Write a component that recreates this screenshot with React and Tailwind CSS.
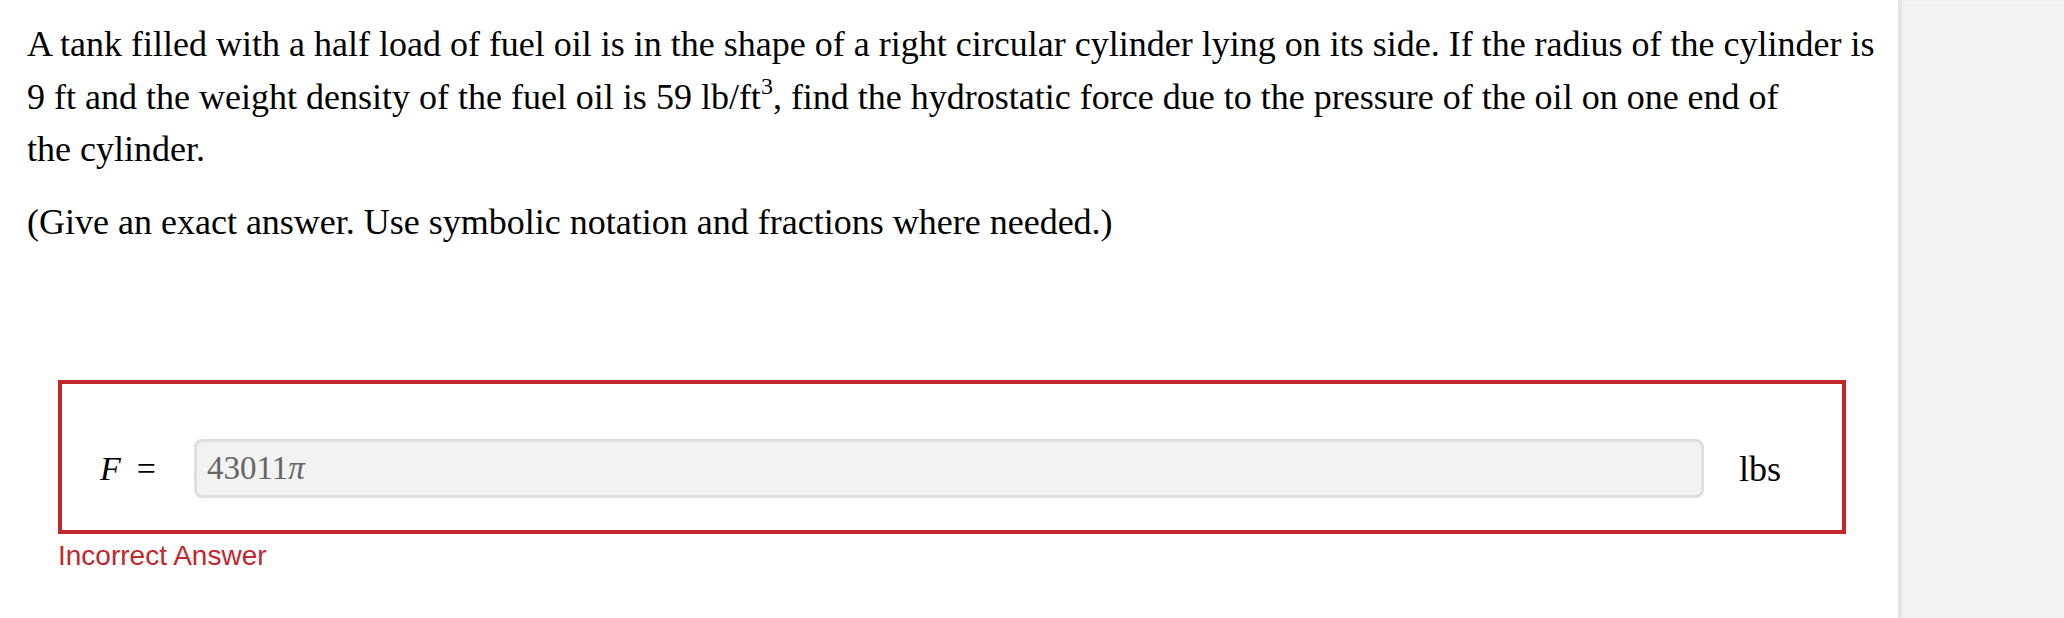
import React from 'react';

const serif = { fontFamily: '"Liberation Serif", "Times New Roman", serif' };

export default function App() {
  return (
    <div className="flex min-h-[618px] w-full bg-white">
      {/* question area */}
      <div className="flex-1 pt-[18px] pl-[27px]">
        <p
          className="text-[36px] leading-[52.5px] text-black whitespace-nowrap font-['Liberation_Serif',serif]"
        >
          A tank filled with a half load of fuel oil is in the shape of a right circular cylinder lying on its side. If the radius of the cylinder is
          <br />
          9 ft and the weight density of the fuel oil is 59 lb/ft
          <sup className="text-[24px] leading-none relative top-[-15px]">3</sup>, find the hydrostatic force due to the pressure of the oil on one end of
          <br />
          the cylinder.
        </p>
        <p className="mt-[20px] text-[36px] leading-[52.5px] text-black font-['Liberation_Serif',serif]">
          (Give an exact answer. Use symbolic notation and fractions where needed.)
        </p>

        {/* answer box */}
        <div className="mt-[132px] ml-[31px] w-[1788px]">
          <div className="flex items-center border-[4px] border-[#c0292b] pt-[55px] pb-[32px] pr-[61px]">
            <div className="flex items-center w-[132px] pl-[38px] text-[34px] text-black" style={serif}>
              <span className="italic">F</span>
              <span className="ml-[16px]">=</span>
            </div>
            <div className="flex flex-1 items-center h-[59px] rounded-[8px] border-[3px] border-[#dedede] bg-[#f2f2f2] pl-[10px]">
              <span className="text-[33px] text-[#666666] leading-none" style={serif}>
                43011<span className="italic">π</span>
              </span>
            </div>
            <span className="ml-[35px] text-[36px] text-black leading-none" style={serif}>
              lbs
            </span>
          </div>
          <div className="mt-[8px] text-[28px] leading-none text-[#c1272d] font-['Liberation_Sans',Arial,sans-serif]">
            Incorrect Answer
          </div>
        </div>
      </div>

      {/* side panel */}
      <div className="w-[166px] shrink-0 bg-[#f2f2f2] border-l-[2px] border-[#e2e2e2] shadow-[inset_2px_0_2px_rgba(0,0,0,0.05)]" />
    </div>
  );
}
